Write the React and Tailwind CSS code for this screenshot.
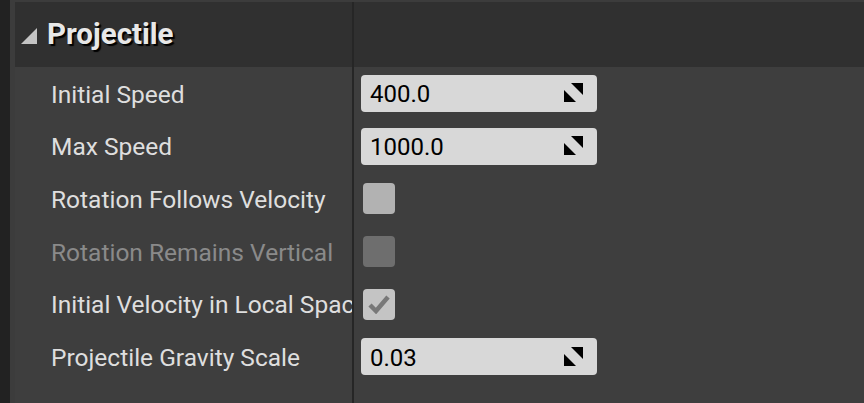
import React from 'react';

const rows = [
  { label: 'Initial Speed', type: 'number', value: '400.0' },
  { label: 'Max Speed', type: 'number', value: '1000.0' },
  { label: 'Rotation Follows Velocity', type: 'check', checked: false },
  { label: 'Rotation Remains Vertical', type: 'check', checked: false, disabled: true },
  { label: 'Initial Velocity in Local Space', type: 'check', checked: true },
  { label: 'Projectile Gravity Scale', type: 'number', value: '0.03' },
];

const SpinIcon = () => (
  <svg width="20" height="20" viewBox="0 0 20 20" className="shrink-0">
    <polygon points="7,0 19,0 19,12" fill="#000" />
    <polygon points="0,7 0,19 12,19" fill="#000" />
  </svg>
);

const NumberField = ({ value }) => (
  <div className="w-[236px] h-[37px] bg-[#d8d8d8] rounded-[4px] flex items-center justify-between pl-[9px] pr-[13px]">
    <span className="text-[24px] text-black leading-none mt-[2px]">{value}</span>
    <SpinIcon />
  </div>
);

const CheckBox = ({ checked, disabled }) => (
  <div
    className={`w-[32px] h-[31px] rounded-[4px] ml-[2px] flex items-center justify-center ${
      disabled ? 'bg-[#6e6e6e]' : checked ? 'bg-[#c4c4c4]' : 'bg-[#b2b2b2]'
    }`}
  >
    {checked && (
      <svg width="24" height="20" viewBox="0 0 24 20">
        <path d="M3 11 L9 17 L21 3" fill="none" stroke="#787878" strokeWidth="4.5" />
      </svg>
    )}
  </div>
);

export default function App() {
  return (
    <div className="w-[864px] h-[403px] overflow-hidden bg-[#222222] pl-[10px] flex font-['Roboto',sans-serif]">
      <div className="flex-1 bg-[#3c3c3c] pt-[2px]">
        {/* Category header */}
        <div className="ml-[5px] h-[65px] bg-[#303030] flex">
          <div className="w-[337px] flex items-center pl-[6px] gap-[10px]">
            <svg width="16" height="16" viewBox="0 0 16 16" className="mt-[3px]">
              <polygon points="16,0 16,16 0,16" fill="#c4c4c4" />
            </svg>
            <span className="text-[29.5px] font-bold text-[#e8e8e8] [text-shadow:2px_2px_1px_#000] leading-none">
              Projectile
            </span>
          </div>
          <div className="w-[2px] bg-[#262626]" />
          <div className="flex-1" />
        </div>

        {rows.map((row) => (
          <div key={row.label} className="ml-[5px] h-[52.7px] flex bg-[#3e3e3e]">
            <div className="w-[337px] flex items-center pl-[36px] overflow-hidden">
              <span
                className={`text-[24.5px] whitespace-nowrap leading-none mt-[3px] ${
                  row.disabled ? 'text-[#8a8a8a]' : 'text-[#dedede]'
                }`}
              >
                {row.label}
              </span>
            </div>
            <div className="w-[2px] bg-[#262626]" />
            <div className="flex-1 flex items-center pl-[7px]">
              {row.type === 'number' ? (
                <NumberField value={row.value} />
              ) : (
                <CheckBox checked={row.checked} disabled={row.disabled} />
              )}
            </div>
          </div>
        ))}
        <div className="ml-[5px] flex h-[40px] bg-[#3e3e3e]">
          <div className="w-[337px]" />
          <div className="w-[2px] bg-[#262626]" />
        </div>
      </div>
    </div>
  );
}
